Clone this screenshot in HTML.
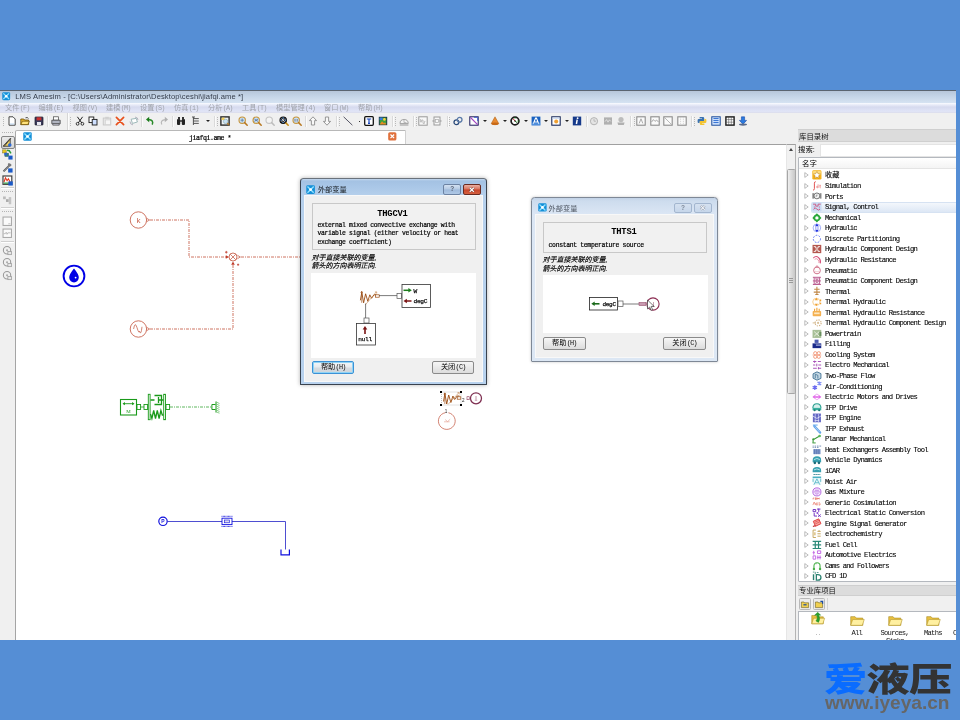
<!DOCTYPE html><html lang="zh"><head><meta charset="utf-8"><title>LMS Amesim</title><style>
*{margin:0;padding:0;box-sizing:border-box}
html,body{width:960px;height:720px;overflow:hidden;background:#558ed5}
body{position:relative;font-family:"Liberation Sans","Noto Sans CJK SC",sans-serif;color:#000}
.a{position:absolute}
.t{position:absolute;white-space:nowrap;line-height:1}
.mono{font-family:"Liberation Mono","Noto Sans CJK SC",monospace}
svg{position:absolute;overflow:visible}
#win{will-change:transform;left:0;top:90px;width:956px;height:550px;background:#f0f0f0;overflow:hidden}
#title{left:0;top:0;width:956px;height:13px;background:linear-gradient(#b7c6da 0%,#c3d3e6 40%,#d6e3f2 100%);border-top:1px solid #5a6470}
#menu{left:0;top:13px;width:956px;height:10px;background:linear-gradient(#fafcff 0,#eef1fb 12%,#d6daee 40%,#dfe3f6 78%,#e1e4f5 90%,#d9dae8 100%)}
#menu .t{font-size:7.2px;color:#a0a3ab;top:.8px}
#menu .t i{font-style:normal;font-size:6.8px;font-family:"Liberation Mono",monospace;letter-spacing:-.75px;position:relative;top:-.2px;margin-left:.3px}
#tbar{left:0;top:23px;width:956px;height:17px;background:#f0f0f0}
.sep{position:absolute;top:2.5px;width:2px;height:11px;border-left:1px solid #dadada;border-right:1px solid #fbfbfb}
.grip{position:absolute;top:3.5px;width:1px;height:10px;background:repeating-linear-gradient(#b9b9b9 0 1px,transparent 1px 2px)}
.dd{position:absolute;top:7.2px;width:0;height:0;border:2.4px solid transparent;border-top:2.8px solid #222;border-bottom:0;margin-left:-.4px}
#left{left:0;top:40px;width:15px;height:510px;background:#f0f0f0}
#tabrow{left:15px;top:40px;width:771px;height:14px;background:#f0f0f0}
#tab{left:0;top:-.2px;width:391px;height:14px;background:#fff;border-right:1px solid #d0d0d0;border-left:1px solid #a9a9a9;border-top:1px solid #b8b8b8;border-top-left-radius:2px}
#canvas{left:15px;top:53.6px;width:771px;height:497px;background:#fff;border-left:1px solid #a5a5a5;border-top:1px solid #a0a0a0}
#vsb{left:786px;top:53.6px;width:10.3px;height:497px;background:#f1f1f1;border-top:1px solid #a0a0a0;border-right:1px solid #b4b4b4;border-left:1px solid #e6e6e6}
#lib{left:797px;top:40px;width:159px;height:510px;background:#f0f0f0}
.hdr{position:absolute;left:1px;width:158px;height:11px;background:#dcdcdc;border-top:1px solid #cfcfcf;border-bottom:1px solid #cfcfcf}
.hdr .t{left:1px;top:1.2px;font-size:7.4px;color:#111}
#tree{left:1px;top:26.7px;width:160px;height:425.3px;background:#fff;border:1px solid #b4b8be;border-radius:1px}
.row{position:absolute;left:0;width:160px;height:10.55px}
.row .tx{position:absolute;left:26px;top:1.6px;font-size:7.2px;line-height:1;white-space:nowrap;color:#000;-webkit-text-stroke:.1px #000}
.row .ar{position:absolute;left:5px;top:1.3px}
.row svg.ic{left:12.6px;top:-.7px}
.lt{font-family:"Liberation Mono","Noto Sans CJK SC",monospace;letter-spacing:-.77px}
</style></head><body>
<div id="win" class="a">
<div id="title" class="a">
<svg style="left:1.9px;top:.9px" width="8.4" height="8.4" viewBox="0 0 10 10"><rect x=".3" y=".3" width="9.4" height="9.4" rx="1.6" fill="#1590d8"/><path d="M1.6 1.6 L8.4 8.4 M8.4 1.6 L1.6 8.4" stroke="#8fe0ff" stroke-width="1.5"/><circle cx="5" cy="5" r="1.5" fill="#fff"/></svg>
<div class="t" id="ttl" style="left:15.3px;top:2.2px;font-size:7.6px;color:#343c4a;letter-spacing:.1px">LMS Amesim - [C:\Users\Administrator\Desktop\ceshi\jiafqi.ame *]</div>
</div>
<div id="menu" class="a">
<div class="t" style="left:5px">文件<i>(F)</i></div>
<div class="t" style="left:38.5px">编辑<i>(E)</i></div>
<div class="t" style="left:72.5px">视图<i>(V)</i></div>
<div class="t" style="left:106px">建模<i>(M)</i></div>
<div class="t" style="left:140px">设置<i>(S)</i></div>
<div class="t" style="left:174px">仿真<i>(i)</i></div>
<div class="t" style="left:208px">分析<i>(A)</i></div>
<div class="t" style="left:242px">工具<i>(T)</i></div>
<div class="t" style="left:276px">模型管理<i>(4)</i></div>
<div class="t" style="left:324px">窗口<i>(W)</i></div>
<div class="t" style="left:358px">帮助<i>(H)</i></div>
</div>
<div id="tbar" class="a">
<div class="a" style="left:66.5px;top:0;width:2px;height:16.5px;border-left:1px solid #d6d6d6;border-right:1px solid #fcfcfc"></div>
<svg style="left:7px;top:2.9000000000000004px" width="10" height="10" viewBox="0 0 10 10"><path d="M2 .8h4l2.2 2.2v6.2H2z" fill="#fff" stroke="#333" stroke-width=".9"/><path d="M3 7.5h4.2v1H3z" fill="#b8d4f0"/></svg>
<svg style="left:20px;top:2.9000000000000004px" width="10" height="10" viewBox="0 0 10 10"><path d="M.8 3h3l.8 1h4v4.6H.8z" fill="#e8b830" stroke="#6a4a00" stroke-width=".8"/><path d="M.8 8.6l1.6-3.4h7l-1.6 3.4z" fill="#ffe27a" stroke="#6a4a00" stroke-width=".7"/><path d="M5.5 1.8q2-.9 3 .8" fill="none" stroke="#222" stroke-width=".8"/></svg>
<svg style="left:34px;top:2.9000000000000004px" width="10" height="10" viewBox="0 0 10 10"><rect x="1" y="1" width="8" height="8" rx=".6" fill="#3a3a5a" stroke="#1a1a2a" stroke-width=".7"/><rect x="2.6" y="1.3" width="4.8" height="3" fill="#c83030"/><rect x="3" y="6" width="4" height="3" fill="#e8e8f0"/></svg>
<svg style="left:51px;top:2.9000000000000004px" width="10" height="10" viewBox="0 0 10 10"><rect x="2.6" y=".8" width="4.8" height="3.4" fill="#fff" stroke="#444" stroke-width=".7"/><path d="M.8 4.2h8.4v3.6H.8z" fill="#b0b4c0" stroke="#333" stroke-width=".7"/><path d="M1.8 7.8h6.4v1.4H1.8z" fill="#dde" stroke="#333" stroke-width=".6"/></svg>
<svg style="left:75px;top:2.9000000000000004px" width="10" height="10" viewBox="0 0 10 10"><path d="M2.4 .8L6.8 7M7.6 .8L3.2 7" stroke="#222" stroke-width="1" fill="none"/><circle cx="2.6" cy="7.8" r="1.4" fill="none" stroke="#222" stroke-width=".9"/><circle cx="7.4" cy="7.8" r="1.4" fill="none" stroke="#222" stroke-width=".9"/></svg>
<svg style="left:88px;top:2.9000000000000004px" width="10" height="10" viewBox="0 0 10 10"><rect x="1" y="1" width="4.8" height="5.6" fill="#fff" stroke="#1a1a1a" stroke-width=".9"/><rect x="4.2" y="3.4" width="4.8" height="5.6" fill="#cfe0ff" stroke="#1a1a1a" stroke-width=".9"/></svg>
<svg style="left:102px;top:2.9000000000000004px" width="10" height="10" viewBox="0 0 10 10"><rect x="1.2" y="2" width="7.6" height="7" fill="#e4e4e4" stroke="#c4c4c4" stroke-width=".8"/><rect x="3.2" y=".8" width="3.6" height="2" fill="#d0d0d0"/><rect x="3.4" y="4" width="5" height="4.6" fill="#f6f6f6" stroke="#c8c8c8" stroke-width=".5"/></svg>
<svg style="left:115px;top:2.9000000000000004px" width="10" height="10" viewBox="0 0 10 10"><path d="M1.4 1.4L8.6 8.6M8.6 1.4L1.4 8.6" stroke="#e8501c" stroke-width="1.7" stroke-linecap="round"/></svg>
<svg style="left:129px;top:2.9000000000000004px" width="10" height="10" viewBox="0 0 10 10"><path d="M2.2 3.2l5-.8 1.2 3.6-5 1.4z" fill="#fff" stroke="#8aa" stroke-width=".8"/><path d="M1 5.5q0 3 3 3.4M9 4q0-2.6-3-3" stroke="#99a" stroke-width=".7" fill="none"/></svg>
<svg style="left:145px;top:2.9000000000000004px" width="10" height="10" viewBox="0 0 10 10"><path d="M7.2 8.6q2-4.6-3.8-5" fill="none" stroke="#2a8a2a" stroke-width="1.5"/><path d="M1 3.6l3.2-2.8v5.4z" fill="#1a7a1a"/></svg>
<svg style="left:159px;top:2.9000000000000004px" width="10" height="10" viewBox="0 0 10 10"><path d="M2.8 8.6q-2-4.6 3.8-5" fill="none" stroke="#b8b8b8" stroke-width="1.2"/><path d="M9 3.6L5.8.8v5.4z" fill="#b0b0b0"/></svg>
<svg style="left:176px;top:2.9000000000000004px" width="10" height="10" viewBox="0 0 10 10"><rect x="1" y="3" width="3.2" height="6" rx="1" fill="#222"/><rect x="5.8" y="3" width="3.2" height="6" rx="1" fill="#222"/><rect x="2" y="1" width="2" height="3" fill="#333"/><rect x="6" y="1" width="2" height="3" fill="#333"/><rect x="4" y="4" width="2" height="2" fill="#555"/></svg>
<svg style="left:191px;top:2.9000000000000004px" width="10" height="10" viewBox="0 0 10 10"><path d="M2.4 1v8M2.4 2.6h5.4M2.4 5h5.4M2.4 7.4h5.4" stroke="#444" stroke-width=".9" fill="none"/><path d="M1 1h3" stroke="#444" stroke-width=".9"/></svg>
<svg style="left:220px;top:2.9000000000000004px" width="10" height="10" viewBox="0 0 10 10"><rect x=".9" y=".9" width="8.2" height="8.2" fill="#eef2f6" stroke="#2a2a2a" stroke-width="1.4"/><rect x="1.6" y="1.6" width="3" height="2.4" fill="#f0d060"/><circle cx="5.6" cy="5.4" r="2.2" fill="#c6dff5" stroke="#8aa" stroke-width=".6"/><path d="M7.2 7.2L9.2 9.2" stroke="#b87820" stroke-width="1.2"/></svg>
<svg style="left:238px;top:2.9000000000000004px" width="10" height="10" viewBox="0 0 10 10"><circle cx="4.2" cy="4.2" r="3.2" fill="#c6dff5" stroke="#c8963c" stroke-width="1.1"/><path d="M6.6 6.6L9.2 9.2" stroke="#b87820" stroke-width="1.5" stroke-linecap="round"/><path d="M2.6 4.2h3.2M4.2 2.6v3.2" stroke="#5a7a9a" stroke-width=".8"/></svg>
<svg style="left:251.5px;top:2.9000000000000004px" width="10" height="10" viewBox="0 0 10 10"><circle cx="4.2" cy="4.2" r="3.2" fill="#c6dff5" stroke="#c8963c" stroke-width="1.1"/><path d="M6.6 6.6L9.2 9.2" stroke="#b87820" stroke-width="1.5" stroke-linecap="round"/><path d="M2.4 3l3.6 2.4M2.4 5.4l3.6-2.4" stroke="#4a6a9a" stroke-width=".8"/></svg>
<svg style="left:265px;top:2.9000000000000004px" width="10" height="10" viewBox="0 0 10 10"><circle cx="4.2" cy="4.2" r="3.2" fill="#f4f4f4" stroke="#c4c4c4" stroke-width="1.1"/><path d="M6.6 6.6L9.2 9.2" stroke="#bdbdbd" stroke-width="1.5" stroke-linecap="round"/></svg>
<svg style="left:278.5px;top:2.9000000000000004px" width="10" height="10" viewBox="0 0 10 10"><circle cx="4.2" cy="4.2" r="3.2" fill="#6aa0e0" stroke="#111" stroke-width="1.1"/><path d="M6.6 6.6L9.2 9.2" stroke="#c88a10" stroke-width="1.5" stroke-linecap="round"/><path d="M1.8 1.8l4.8 4.8M6.6 1.8L1.8 6.6" stroke="#111" stroke-width="1.7"/><path d="M2.6 2.6l3.2 3.2M5.8 2.6L2.6 5.8" stroke="#fff" stroke-width=".8"/></svg>
<svg style="left:292px;top:2.9000000000000004px" width="10" height="10" viewBox="0 0 10 10"><circle cx="4.2" cy="4.2" r="3.2" fill="#c6dff5" stroke="#c8963c" stroke-width="1.1"/><path d="M6.6 6.6L9.2 9.2" stroke="#b87820" stroke-width="1.5" stroke-linecap="round"/><path d="M3 3v2.6M5.2 3v2.6" stroke="#556" stroke-width=".7"/></svg>
<svg style="left:308px;top:2.9000000000000004px" width="10" height="10" viewBox="0 0 10 10"><path d="M5 .8L8.6 4.6H6.6V9H3.4V4.6H1.4z" fill="#f8f8f8" stroke="#8c8c8c" stroke-width=".9"/></svg>
<svg style="left:322px;top:2.9000000000000004px" width="10" height="10" viewBox="0 0 10 10"><path d="M5 9.2L8.6 5.4H6.6V1H3.4v4.4H1.4z" fill="#f8f8f8" stroke="#8c8c8c" stroke-width=".9"/></svg>
<svg style="left:343px;top:2.9000000000000004px" width="10" height="10" viewBox="0 0 10 10"><path d="M.6 .8L9.4 9.2" stroke="#445" stroke-width=".9"/></svg>
<svg style="left:364px;top:2.9000000000000004px" width="10" height="10" viewBox="0 0 10 10"><rect x=".7" y=".7" width="8.6" height="8.6" rx="1" fill="#fff" stroke="#111" stroke-width="1.3"/><path d="M2.8 3h4.4M5 3v4.4M4 7.4h2" stroke="#1a48c0" stroke-width="1.2"/></svg>
<svg style="left:378px;top:2.9000000000000004px" width="10" height="10" viewBox="0 0 10 10"><rect x=".8" y=".8" width="8.4" height="8.4" fill="#1a2a4a"/><rect x="1.6" y="1.6" width="6.8" height="6.8" fill="#3aa040"/><circle cx="6.4" cy="3.4" r="1.3" fill="#ffd040"/><path d="M1.6 8.4l2.4-3.2 2 2 1-1 1.4 2.2z" fill="#e88a20"/><path d="M1.6 1.6h3v2.4h-3z" fill="#3a7ae0"/></svg>
<svg style="left:399px;top:2.9000000000000004px" width="10" height="10" viewBox="0 0 10 10"><path d="M1 7.6a4.1 4.1 0 1 1 8.2 0z" fill="#f4f4f4" stroke="#a0a0a0" stroke-width="1"/><path d="M5 6.6V3.4M5 6.6h2.4" stroke="#aaa" stroke-width=".8"/><path d="M.8 9h8.6" stroke="#a8a8a8" stroke-width="1.2"/></svg>
<svg style="left:418px;top:2.9000000000000004px" width="10" height="10" viewBox="0 0 10 10"><rect x=".8" y=".8" width="8.4" height="8.4" fill="#f8f8f8" stroke="#9a9a9a" stroke-width="1"/><path d="M2.4 3v3h1.2v-2h1.4v3.4h1.4v-2h1" stroke="#aaa" stroke-width=".7" fill="none"/></svg>
<svg style="left:432px;top:2.9000000000000004px" width="10" height="10" viewBox="0 0 10 10"><rect x="2" y="1" width="6" height="8" fill="#f8f8f8" stroke="#9a9a9a" stroke-width="1"/><rect x="3.4" y="3.4" width="3.2" height="3.2" fill="none" stroke="#aaa" stroke-width=".7"/><path d="M.4 5h2M7.6 5h2" stroke="#999" stroke-width="1"/></svg>
<svg style="left:453px;top:2.9000000000000004px" width="10" height="10" viewBox="0 0 10 10"><circle cx="3.4" cy="6.2" r="2.4" fill="none" stroke="#2a4a7a" stroke-width="1.3"/><circle cx="6.6" cy="3.8" r="2.4" fill="none" stroke="#5a7aa8" stroke-width="1.3"/></svg>
<svg style="left:469px;top:2.9000000000000004px" width="10" height="10" viewBox="0 0 10 10"><rect x=".8" y=".8" width="8.4" height="8.4" fill="#fff" stroke="#1a1a5a" stroke-width="1"/><path d="M1.4 1.4L8.6 8.6" stroke="#a040c0" stroke-width="1.2"/><path d="M5 1.4h3.6V5" fill="none" stroke="#4060d0" stroke-width=".9"/></svg>
<svg style="left:490px;top:2.9000000000000004px" width="10" height="10" viewBox="0 0 10 10"><path d="M5 .8L8.8 7.6Q5 10 1.2 7.6z" fill="#e88a30" stroke="#a85a10" stroke-width=".5"/><ellipse cx="5" cy="7.8" rx="3.6" ry="1.3" fill="#c86a18"/></svg>
<svg style="left:510px;top:2.9000000000000004px" width="10" height="10" viewBox="0 0 10 10"><circle cx="5" cy="5" r="3.9" fill="#fff" stroke="#1a1a1a" stroke-width="1.7"/><path d="M5 1.2v1.4M8.8 5H7.4" stroke="#2a9a2a" stroke-width=".9"/><path d="M5 5L3.2 2.8" stroke="#d02020" stroke-width="1"/><path d="M5 5l2 1.6" stroke="#1a7a1a" stroke-width="1"/><circle cx="5" cy="5" r=".8" fill="#222"/></svg>
<svg style="left:531px;top:2.9000000000000004px" width="10" height="10" viewBox="0 0 10 10"><rect x=".6" y=".6" width="8.8" height="8.8" fill="#1a62c0"/><path d="M2.2 8L4.6 2h.8L7.8 8M3.2 6h3.6" stroke="#fff" stroke-width="1.1" fill="none"/><rect x=".6" y="6.6" width="8.8" height="2.8" fill="#7ab0f0" opacity=".55"/></svg>
<svg style="left:551px;top:2.9000000000000004px" width="10" height="10" viewBox="0 0 10 10"><rect x=".8" y=".8" width="8.4" height="8.4" fill="#fff" stroke="#1a2a5a" stroke-width="1.1"/><circle cx="5.2" cy="5.4" r="2" fill="#f0a030"/><path d="M1.4 1.4h7.2v1.4H1.4z" fill="#c8d8f0"/></svg>
<svg style="left:572px;top:2.9000000000000004px" width="10" height="10" viewBox="0 0 10 10"><rect x=".8" y=".6" width="8.4" height="8.8" fill="#163a8a"/><path d="M5.2 3.6L4.4 8" stroke="#fff" stroke-width="1.5"/><circle cx="5.6" cy="2.2" r=".9" fill="#fff"/></svg>
<svg style="left:589px;top:2.9000000000000004px" width="10" height="10" viewBox="0 0 10 10"><circle cx="5" cy="5.2" r="3.6" fill="#e4e4e4" stroke="#b4b4b4" stroke-width="1"/><path d="M5 5.2V3M5 5.2h2" stroke="#aaa" stroke-width=".7"/></svg>
<svg style="left:603px;top:2.9000000000000004px" width="10" height="10" viewBox="0 0 10 10"><rect x="1" y="1.4" width="8" height="7.2" fill="#b0b0b0"/><path d="M2 5.6l1.6-2 1.4 2.6 1.4-2.4 1.4 1.6" stroke="#eee" stroke-width=".7" fill="none"/></svg>
<svg style="left:616px;top:2.9000000000000004px" width="10" height="10" viewBox="0 0 10 10"><circle cx="5" cy="3.6" r="2.6" fill="#bcbcbc"/><path d="M1.4 6.6h7.2l-.8 2.4H2.2z" fill="#b0b0b0"/></svg>
<svg style="left:636px;top:2.9000000000000004px" width="10" height="10" viewBox="0 0 10 10"><rect x=".8" y=".8" width="8.4" height="8.4" fill="#fafafa" stroke="#8c8c8c" stroke-width="1.1"/><path d="M3.2 7.4L5 2.8l1.8 4.6" stroke="#888" stroke-width=".7" fill="none"/></svg>
<svg style="left:650px;top:2.9000000000000004px" width="10" height="10" viewBox="0 0 10 10"><rect x=".8" y=".8" width="8.4" height="8.4" fill="#fafafa" stroke="#8c8c8c" stroke-width="1.1"/><path d="M1.6 6l1.8-2.4 1.6 1.8 1.6-1.4 1.8 2" stroke="#888" stroke-width=".7" fill="none"/></svg>
<svg style="left:663px;top:2.9000000000000004px" width="10" height="10" viewBox="0 0 10 10"><rect x=".8" y=".8" width="8.4" height="8.4" fill="#fafafa" stroke="#8c8c8c" stroke-width="1.1"/><path d="M1.6 1.6L8.4 8.4" stroke="#999" stroke-width=".7"/></svg>
<svg style="left:677px;top:2.9000000000000004px" width="10" height="10" viewBox="0 0 10 10"><rect x=".8" y=".8" width="8.4" height="8.4" fill="#fafafa" stroke="#8c8c8c" stroke-width="1.1"/><path d="M3.6 1.4v7.2M6.4 1.4v7.2" stroke="#bbb" stroke-width=".6" stroke-dasharray="1 .8"/></svg>
<svg style="left:697px;top:2.9000000000000004px" width="10" height="10" viewBox="0 0 10 10"><path d="M2.6 1h3.4q1.2 0 1.2 1.2V5H3.6Q2.6 5 2.6 6V7H1.6Q.6 7 .6 5.8V4.2Q.6 3 1.8 3H5V2.4H2.6z" fill="#3a72b0"/><path d="M7.4 9H4q-1.2 0-1.2-1.2V5h3.6Q7.4 5 7.4 4V3h1q1 0 1 1.2v1.6Q9.4 7 8.2 7H5v.6h2.4z" fill="#f4c430"/></svg>
<svg style="left:711px;top:2.9000000000000004px" width="10" height="10" viewBox="0 0 10 10"><rect x=".8" y=".8" width="8.4" height="8.4" fill="#d8e8ff" stroke="#1a4a9a" stroke-width="1"/><path d="M2.4 2.6h5.2M2.4 4.6h5.2M2.4 6.6h5.2" stroke="#2a6ad0" stroke-width="1"/></svg>
<svg style="left:725px;top:2.9000000000000004px" width="10" height="10" viewBox="0 0 10 10"><rect x=".9" y=".9" width="8.2" height="8.2" fill="#fff" stroke="#1a1a1a" stroke-width="1.4"/><path d="M.9 3.6h8.2M.9 6.2h8.2M3.7 .9v8.2M6.3 .9v8.2" stroke="#444" stroke-width=".5"/></svg>
<svg style="left:738px;top:2.9000000000000004px" width="10" height="10" viewBox="0 0 10 10"><path d="M3.4 .8h3.2v3.6h2L5 8.2 1.4 4.4h2z" fill="#2a7ae0" stroke="#0a3a9a" stroke-width=".5"/><ellipse cx="5" cy="8.6" rx="4" ry="1.1" fill="#5a6a8a"/></svg>
<div class="sep" style="left:47px"></div>
<div class="sep" style="left:141px"></div>
<div class="sep" style="left:172px"></div>
<div class="sep" style="left:213.5px"></div>
<div class="sep" style="left:305px"></div>
<div class="sep" style="left:336px"></div>
<div class="sep" style="left:392px"></div>
<div class="sep" style="left:413px"></div>
<div class="sep" style="left:446.5px"></div>
<div class="sep" style="left:586px"></div>
<div class="sep" style="left:629.5px"></div>
<div class="sep" style="left:690.5px"></div>
<div class="grip" style="left:3px"></div>
<div class="grip" style="left:70px"></div>
<div class="grip" style="left:216.5px"></div>
<div class="grip" style="left:338.5px"></div>
<div class="grip" style="left:394.5px"></div>
<div class="grip" style="left:415.5px"></div>
<div class="grip" style="left:449px"></div>
<div class="grip" style="left:634px"></div>
<div class="grip" style="left:694px"></div>
<div class="dd" style="left:206px"></div>
<div class="dd" style="left:483px"></div>
<div class="dd" style="left:503px"></div>
<div class="dd" style="left:524px"></div>
<div class="dd" style="left:544px"></div>
<div class="dd" style="left:565px"></div>
<div class="a" style="left:358.5px;top:8px;width:1.4px;height:1.4px;background:#333"></div>
</div>
<div id="left" class="a">
<div class="a" style="left:2px;top:2.2px;width:11px;height:1px;background:repeating-linear-gradient(90deg,#b4b4b4 0 1px,transparent 1px 2px)"></div>
<div class="a" style="left:1px;top:6px;width:13.5px;height:12.5px;border:1px solid #858585;border-radius:2px;background:linear-gradient(#e9e9e9,#d6d6d6)"></div>
<svg style="left:2.25px;top:7.25px" width="10.5" height="10.5" viewBox="0 0 10 10"><path d="M1 8.8L7.8 1.4V8.8z" fill="#f0d060" stroke="#333" stroke-width=".8"/><path d="M2 9L8.6 1" stroke="#444" stroke-width=".9"/><circle cx="7.4" cy="7.6" r="1.7" fill="#2a6ad8"/></svg>
<svg style="left:2px;top:19px" width="11" height="11" viewBox="0 0 10 10"><rect x=".6" y=".8" width="3.2" height="2.8" fill="#e8c820" stroke="#7a6a10" stroke-width=".4"/><path d="M4.6 1.2l2 .4 1.6 2.4" stroke="#2a9a3a" stroke-width="1.3" fill="none"/><rect x="2.6" y="3.8" width="3.4" height="3" fill="#3a8a5a" stroke="#1a4a7a" stroke-width=".4"/><rect x="2.2" y="3.4" width="2.4" height="2.4" fill="#2a62d0"/><rect x="5.8" y="6" width="3.8" height="3.6" fill="#1a5ac8"/></svg>
<svg style="left:2px;top:32px" width="11" height="11" viewBox="0 0 10 10"><path d="M1.4 8.6L7 2.8" stroke="#555" stroke-width="1.7"/><path d="M1.4 8.6L7 2.8" stroke="#aaa" stroke-width=".6"/><path d="M6 .8q2 .2 2.8 2l-1.2 1.4-2.4-2z" fill="#777"/><rect x="5.6" y="5.8" width="4" height="3.8" fill="#1a5ac8"/></svg>
<svg style="left:2px;top:44.5px" width="11" height="11" viewBox="0 0 10 10"><rect x=".9" y=".9" width="8" height="7.6" fill="#fff" stroke="#444" stroke-width="1.1"/><path d="M1.8 6.4l1.4-3.8 1.4 2.6 1.2-1.8 1.6 3" stroke="#e03820" stroke-width="1" fill="none"/><path d="M1.5 6.8h5v1.2h-5z" fill="#3a9a4a"/><rect x="5.8" y="5.8" width="4" height="3.8" fill="#1a5ac8"/></svg>
<div class="a" style="left:1px;top:57px;width:13px;height:2px;border-top:1px solid #d0d0d0;border-bottom:1px solid #fff"></div>
<div class="a" style="left:2px;top:60.5px;width:11px;height:1px;background:repeating-linear-gradient(90deg,#b4b4b4 0 1px,transparent 1px 2px)"></div>
<svg style="left:2.25px;top:64.75px" width="10.5" height="10.5" viewBox="0 0 10 10"><rect x="1" y="1.4" width="2.6" height="2.6" fill="#bbb"/><rect x="3.8" y="4" width="2.6" height="2.6" fill="#aaa"/><rect x="6.4" y="2" width="2.4" height="6.8" fill="#c4c4c4"/></svg>
<div class="a" style="left:1px;top:77px;width:13px;height:2px;border-top:1px solid #d0d0d0;border-bottom:1px solid #fff"></div>
<div class="a" style="left:2px;top:80.5px;width:11px;height:1px;background:repeating-linear-gradient(90deg,#b4b4b4 0 1px,transparent 1px 2px)"></div>
<svg style="left:2.25px;top:85.75px" width="10.5" height="10.5" viewBox="0 0 10 10"><rect x="1" y="1" width="8" height="8" fill="#fafafa" stroke="#a8a8a8" stroke-width="1"/><path d="M6 7.4h2" stroke="#bbb" stroke-width=".8"/></svg>
<svg style="left:2.25px;top:97.75px" width="10.5" height="10.5" viewBox="0 0 10 10"><rect x="1" y="1" width="8" height="8" fill="#fafafa" stroke="#a8a8a8" stroke-width="1"/><path d="M1.6 5.4h1.6l.8-1.4.8 2 .8-1.4h2.6" stroke="#aaa" stroke-width=".7" fill="none"/></svg>
<div class="a" style="left:1px;top:111px;width:13px;height:2px;border-top:1px solid #d0d0d0;border-bottom:1px solid #fff"></div>
<svg style="left:2.25px;top:114.75px" width="10.5" height="10.5" viewBox="0 0 10 10"><circle cx="4.8" cy="5" r="3.5" fill="#f0f0f0" stroke="#999" stroke-width="1"/><circle cx="4.8" cy="5" r="1" fill="#aaa"/><rect x="5.6" y="6.2" width="3.4" height="3" fill="#e8e8e8" stroke="#999" stroke-width=".7"/></svg>
<svg style="left:2.25px;top:127.25px" width="10.5" height="10.5" viewBox="0 0 10 10"><circle cx="4.8" cy="5" r="3.5" fill="#f0f0f0" stroke="#999" stroke-width="1"/><circle cx="4.8" cy="5" r="1" fill="#aaa"/><rect x="5.6" y="6.2" width="3.4" height="3" fill="#e8e8e8" stroke="#999" stroke-width=".7"/></svg>
<svg style="left:2.25px;top:139.75px" width="10.5" height="10.5" viewBox="0 0 10 10"><circle cx="4.8" cy="5" r="3.5" fill="#f0f0f0" stroke="#999" stroke-width="1"/><circle cx="4.8" cy="5" r="1" fill="#aaa"/><rect x="5.6" y="6.2" width="3.4" height="3" fill="#e8e8e8" stroke="#999" stroke-width=".7"/></svg>
</div>
<div id="tabrow" class="a"><div id="tab" class="a">
<svg style="left:6.5px;top:.8px" width="9" height="9" viewBox="0 0 10 10"><rect x=".3" y=".3" width="9.4" height="9.4" rx="1.4" fill="#1590d8"/><path d="M1.6 1.6L8.4 8.4M8.4 1.6L1.6 8.4" stroke="#8fe0ff" stroke-width="1.5"/><circle cx="5" cy="5" r="1.5" fill="#fff"/></svg>
<div class="t mono" style="left:173px;top:4.7px;font-size:6.6px;letter-spacing:-.45px;color:#000;-webkit-text-stroke:.2px #000">jiafqi.ame *</div>
<svg style="left:372.4px;top:1.6px" width="8.6" height="8.6" viewBox="0 0 9 9"><rect x=".2" y=".2" width="8.6" height="8.6" rx="1.6" fill="#e0713c"/><path d="M2.6 2.6l3.8 3.8M6.4 2.6L2.6 6.4" stroke="#fff" stroke-width="1.3"/></svg>
</div></div>
<div id="canvas" class="a"><svg style="left:-16px;top:-144.6px" width="960" height="720" viewBox="0 0 960 720" fill="none">
<circle cx="138.4" cy="220" r="8.2" stroke="#c86450" stroke-width=".9" fill="#fff"/>
<text x="138.5" y="222.8" font-family="Liberation Sans,sans-serif" font-size="8" fill="#c86450" text-anchor="middle">k</text>
<path d="M146.6 218.3l3 1.7-3 1.7" stroke="#c86450" stroke-width=".8"/>
<path d="M150 220H189V257H226" stroke="#c86450" stroke-width=".9" stroke-dasharray="3 1 1 1"/>
<circle cx="233" cy="257" r="4" stroke="#c86450" stroke-width=".9" fill="#fff"/><path d="M230.2 254.2l5.6 5.6M235.8 254.2l-5.6 5.6" stroke="#c86450" stroke-width=".8"/>
<path d="M225.8 255.2l3.2 1.8-3.2 1.8zM231.2 264.8l1.8-3.4 1.8 3.4z" fill="#c03a28"/><path d="M237.4 255.3l3 1.7-3 1.7" stroke="#c86450" stroke-width=".8"/>
<path d="M225 252.2h2.6M226.3 250.9v2.6M237 264.7h2.2M238.1 263.6v2.2" stroke="#c03a28" stroke-width=".8"/>
<path d="M241 257H301" stroke="#c86450" stroke-width=".9" stroke-dasharray="3 1 1 1"/>
<circle cx="138.4" cy="329" r="8.2" stroke="#c86450" stroke-width=".9" fill="#fff"/>
<path d="M133.6 329q1.4-8 3.4-1.4t2.4 3.6q1.6 5 2.6-4.4" stroke="#c86450" stroke-width=".8"/>
<path d="M146.6 327.3l3 1.7-3 1.7" stroke="#c86450" stroke-width=".8"/>
<path d="M150 329H233V265" stroke="#c86450" stroke-width=".9" stroke-dasharray="3 1 1 1"/>
<circle cx="74" cy="276" r="10.4" stroke="#0000e6" stroke-width="1.9" fill="#fff"/>
<path d="M74 268.6q4.8 5.8 4.8 9a4.8 4.8 0 0 1-9.6 0q0-3.2 4.8-9z" fill="#0000e6"/><circle cx="75.6" cy="277.6" r=".9" fill="#fff"/>
<rect x="120.5" y="399.5" width="16" height="15.5" stroke="#1a9a1a" stroke-width="1.1" fill="#fff"/>
<path d="M123.5 403.7h10" stroke="#1a9a1a" stroke-width=".9"/><path d="M122.5 403.7l2.4-1.6v3.2zM134.5 403.7l-2.4-1.6v3.2z" fill="#1a9a1a"/>
<text x="128.5" y="412.5" font-family="Liberation Serif,serif" font-size="5" fill="#1a9a1a" text-anchor="middle">M</text>
<rect x="137" y="404.5" width="3.6" height="5" stroke="#1a9a1a" stroke-width=".9" fill="#fff"/><path d="M140.6 407h3.4" stroke="#1a9a1a" stroke-width=".8"/>
<rect x="144" y="404.5" width="3.6" height="5" stroke="#1a9a1a" stroke-width=".9" fill="#fff"/>
<rect x="148.3" y="394.3" width="1.8" height="25.4" stroke="#1a9a1a" stroke-width=".9" fill="#fff"/><rect x="163.7" y="394.3" width="1.8" height="25.4" stroke="#1a9a1a" stroke-width=".9" fill="#fff"/>
<path d="M150.5 400h4M154.5 395.5h7v9h-7M158.5 397v6M158.5 400h5" stroke="#1a9a1a" stroke-width="1.3"/>
<path d="M150.5 414l1.4 4.5 1.8-8 1.8 8 1.8-8 1.8 8 1.8-8 1.4 4.5h1" stroke="#1a9a1a" stroke-width="1.3"/>
<rect x="166" y="404.5" width="3.6" height="5" stroke="#1a9a1a" stroke-width=".9" fill="#fff"/>
<path d="M170 407H211" stroke="#1a9a1a" stroke-width=".7" stroke-dasharray="3 1 1 1"/>
<path d="M215.5 404.5h-3.6v5h3.6M216 401.5v11" stroke="#1a9a1a" stroke-width="1"/><path d="M216.5 402l3 1.6M216.5 404l3 1.6M216.5 406l3 1.6M216.5 408l3 1.6M216.5 410l3 1.6M216.5 412l3 1.2" stroke="#1a9a1a" stroke-width=".5"/>
<circle cx="163" cy="521.3" r="4.2" stroke="#1010dd" stroke-width="1.2" fill="#fff"/><text x="163" y="523.3" font-family="Liberation Sans,sans-serif" font-size="5" font-weight="bold" fill="#1010dd" text-anchor="middle">P</text>
<path d="M167 521.5H285.5V549.5" stroke="#3a3acc" stroke-width=".9"/>
<rect x="222" y="518.2" width="10" height="6.4" stroke="#1010dd" stroke-width=".9" fill="#fff"/><rect x="224.5" y="520" width="5" height="2.8" stroke="#1010dd" stroke-width=".6" fill="#dde"/><path d="M221.6 516.3h10.8M221.6 526.4h10.8" stroke="#1010dd" stroke-width="1" stroke-dasharray=".8 .5"/>
<path d="M281 549.5v5.3h8.4v-5.3" stroke="#1010dd" stroke-width="1.2"/>
<rect x="441.5" y="392" width="19.5" height="13" stroke="#888" stroke-width=".5" stroke-dasharray="1 1" fill="#fff"/>
<path d="M443.5 401.5l1.4-8 1.8 10.5 2-9 2.2 7.5 2-6.5 1.8 3.5 2.4-3.5h2.4" stroke="#9a4a10" stroke-width=".9"/><path d="M444.8 393v11M443.8 394.4l1-1.6 1 1.6" stroke="#9a4a10" stroke-width=".6"/><path d="M448 404.5l11-12M457.4 392.6h1.8v1.8" stroke="#b87030" stroke-width=".5"/><rect x="457.2" y="396.8" width="3.6" height="2.4" stroke="#9a4a10" stroke-width=".7" fill="#fff"/>
<rect x="440" y="391" width="2" height="2" fill="#000"/>
<rect x="460" y="391" width="2" height="2" fill="#000"/>
<rect x="440" y="404" width="2" height="2" fill="#000"/>
<rect x="460" y="404" width="2" height="2" fill="#000"/>
<text x="462" y="402" font-family="Liberation Sans,sans-serif" font-size="4.6" fill="#222">2</text><text x="444.8" y="413" font-family="Liberation Sans,sans-serif" font-size="4.6" fill="#222">1</text>
<rect x="467" y="396.7" width="2.2" height="3" stroke="#8a3a5a" stroke-width=".6" fill="#fff"/>
<circle cx="476" cy="398.3" r="5.5" stroke="#7e2e50" stroke-width="1.25" fill="#fff"/><path d="M476 396v3.6M474.8 400.2h2.4" stroke="#b07a90" stroke-width=".8"/>
<path d="M448.4 412.75A8.4 8.4 0 1 1 445.2 412.75" stroke="#c86450" stroke-width=".8"/>
<path d="M444 421.8h5.6M445.2 419.6l2.4 2 2.6-2.4" stroke="#e09888" stroke-width=".6"/>
</svg></div>
<div id="vsb" class="a">
<div class="a" style="left:2px;top:3.5px;width:0;height:0;border:2.5px solid transparent;border-bottom:3px solid #444;border-top:0"></div>
<div class="a" style="left:-.3px;top:24.5px;width:9px;height:225px;border:1px solid #a6a6a6;border-radius:1.5px;background:linear-gradient(90deg,#efefef,#dedede 40%,#c8c8c8)"></div>
<div class="a" style="left:2px;top:133px;width:4px;height:5px;background:repeating-linear-gradient(#999 0 1px,transparent 1px 2px)"></div>
</div>
<div id="lib" class="a">
<div class="hdr" style="top:-.8px;height:12.5px"><div class="t" style="top:2.7px">库目录树</div></div>
<div class="t" style="left:1px;top:16.2px;font-size:7.4px">搜索:</div>
<div class="a" style="left:22.5px;top:14px;width:140px;height:12.5px;background:#fff;border:1px solid #e4e4e4"></div>
<div id="tree" class="a">
<div class="a" style="left:0;top:0;width:160px;height:11.8px;background:linear-gradient(#fff,#f4f4f4);border-bottom:1px solid #e4e4e4"><div class="t" style="left:3px;top:1.9px;font-size:7.4px">名字</div></div>
<div class="row" style="top:13.3px"><svg class="ar" width="5" height="6" viewBox="0 0 5 6"><path d="M.8 .6L4.2 3 .8 5.4z" fill="#fff" stroke="#a0a0a0" stroke-width=".7"/></svg><svg class="ic" width="9.8" height="9.8" viewBox="0 0 9 9"><rect x=".3" y=".3" width="8.4" height="8.4" rx="1.2" fill="#f5b21a"/><rect x=".9" y=".9" width="7.2" height="3.4" rx=".6" fill="#ffeaa0" opacity=".75"/><path d="M4.5 1.3l1 2.1 2.3.3-1.7 1.6.4 2.3-2-1.1-2 1.1.4-2.3L1.2 3.7l2.3-.3z" fill="#fff" stroke="#b57a10" stroke-width=".45"/></svg><div class="tx" style="top:.2px">收藏</div></div>
<div class="row" style="top:23.85px"><svg class="ar" width="5" height="6" viewBox="0 0 5 6"><path d="M.8 .6L4.2 3 .8 5.4z" fill="#fff" stroke="#a0a0a0" stroke-width=".7"/></svg><svg class="ic" width="9.8" height="9.8" viewBox="0 0 9 9"><path d="M3.4 .6q-1.2 0-1.2 1.4v5q0 1.4-1.2 1.4" stroke="#e05050" stroke-width=".9" fill="none"/><path d="M5.6 3v3.4M5.6 5q-1.6-.8-1.4.6t1.4.4M7.4 3.4v2.6q.2.6.8.2M6.8 4.4h1.4" stroke="#e87878" stroke-width=".6" fill="none"/></svg><div class="tx lt">Simulation</div></div>
<div class="row" style="top:34.4px"><svg class="ar" width="5" height="6" viewBox="0 0 5 6"><path d="M.8 .6L4.2 3 .8 5.4z" fill="#fff" stroke="#a0a0a0" stroke-width=".7"/></svg><svg class="ic" width="9.8" height="9.8" viewBox="0 0 9 9"><rect x=".3" y="2" width="1.7" height="5" fill="#8a8a8a"/><rect x="7" y="2" width="1.7" height="5" fill="#8a8a8a"/><circle cx="4.5" cy="4.5" r="2.7" fill="#f4f4f4" stroke="#666" stroke-width=".8"/><path d="M4.5 4.7V3.2M4.5 4.7h-1.2" stroke="#666" stroke-width=".6"/></svg><div class="tx lt">Ports</div></div>
<div class="row" style="top:44.95px"><div class="a" style="left:12px;top:-.3px;width:150px;height:10.6px;border:1px solid #d6e2f2;border-radius:1.5px;background:linear-gradient(#f3f7fc,#dde7f5)"></div><svg class="ar" width="5" height="6" viewBox="0 0 5 6"><path d="M.8 .6L4.2 3 .8 5.4z" fill="#fff" stroke="#a0a0a0" stroke-width=".7"/></svg><svg class="ic" width="9.8" height="9.8" viewBox="0 0 9 9"><rect x=".2" y=".2" width="8.6" height="8.6" rx="1" fill="#c9dbf3"/><path d="M1 2h2.4v1.8h2.2V2H8M1.4 6.8q1.5-2.4 3-.4t3 .2" stroke="#d05078" stroke-width=".8" fill="none"/><path d="M2.2 3.8v2M6.8 3.8v2" stroke="#c878a8" stroke-width=".6"/></svg><div class="tx lt">Signal, Control</div></div>
<div class="row" style="top:55.5px"><svg class="ar" width="5" height="6" viewBox="0 0 5 6"><path d="M.8 .6L4.2 3 .8 5.4z" fill="#fff" stroke="#a0a0a0" stroke-width=".7"/></svg><svg class="ic" width="9.8" height="9.8" viewBox="0 0 9 9"><path d="M4.5 .3L6.2 2H2.8zM4.5 8.7L6.2 7H2.8zM.3 4.5L2 2.8v3.4zM8.7 4.5L7 2.8v3.4z" fill="#2aa83a"/><circle cx="4.5" cy="4.5" r="2.3" fill="#fff" stroke="#2aa83a" stroke-width="1.5"/></svg><div class="tx lt">Mechanical</div></div>
<div class="row" style="top:66.05px"><svg class="ar" width="5" height="6" viewBox="0 0 5 6"><path d="M.8 .6L4.2 3 .8 5.4z" fill="#fff" stroke="#a0a0a0" stroke-width=".7"/></svg><svg class="ic" width="9.8" height="9.8" viewBox="0 0 9 9"><circle cx="4.5" cy="4.5" r="3.5" fill="#fff" stroke="#8a9af4" stroke-width=".7"/><path d="M4.5 .5l1.7 2.4H2.8zM4.5 8.5l1.7-2.4H2.8z" fill="#2434e0"/><path d="M3.5 3.2v2.6M5.5 3.2v2.6" stroke="#5a6af0" stroke-width=".6"/></svg><div class="tx lt">Hydraulic</div></div>
<div class="row" style="top:76.6px"><svg class="ar" width="5" height="6" viewBox="0 0 5 6"><path d="M.8 .6L4.2 3 .8 5.4z" fill="#fff" stroke="#a0a0a0" stroke-width=".7"/></svg><svg class="ic" width="9.8" height="9.8" viewBox="0 0 9 9"><circle cx="4.5" cy="4.5" r="3.3" fill="none" stroke="#5a72f0" stroke-width=".9" stroke-dasharray="1.5 1.3"/></svg><div class="tx lt">Discrete Partitioning</div></div>
<div class="row" style="top:87.15px"><svg class="ar" width="5" height="6" viewBox="0 0 5 6"><path d="M.8 .6L4.2 3 .8 5.4z" fill="#fff" stroke="#a0a0a0" stroke-width=".7"/></svg><svg class="ic" width="9.8" height="9.8" viewBox="0 0 9 9"><rect x=".5" y=".8" width="8" height="7.6" fill="#b4564e"/><path d="M1.6 2.4h1.8v1.4h2.2V2.4h1.8M1.6 6.8h1.8V5.4h2.2v1.4h1.8" stroke="#fff" stroke-width=".8" fill="none"/></svg><div class="tx lt">Hydraulic Component Design</div></div>
<div class="row" style="top:97.7px"><svg class="ar" width="5" height="6" viewBox="0 0 5 6"><path d="M.8 .6L4.2 3 .8 5.4z" fill="#fff" stroke="#a0a0a0" stroke-width=".7"/></svg><svg class="ic" width="9.8" height="9.8" viewBox="0 0 9 9"><path d="M1.2 2.8Q3.6 .2 6 2.4T7.6 7.6" stroke="#d8507a" stroke-width="1" fill="none"/><path d="M2.4 4Q4 2.6 5.4 4.2T6.4 7.4" stroke="#e88aa4" stroke-width=".8" fill="none"/></svg><div class="tx lt">Hydraulic Resistance</div></div>
<div class="row" style="top:108.25px"><svg class="ar" width="5" height="6" viewBox="0 0 5 6"><path d="M.8 .6L4.2 3 .8 5.4z" fill="#fff" stroke="#a0a0a0" stroke-width=".7"/></svg><svg class="ic" width="9.8" height="9.8" viewBox="0 0 9 9"><circle cx="4.6" cy="5" r="3.1" fill="#fff" stroke="#d07088" stroke-width=".9"/><path d="M3.7 2.2V1h1.8v1.2" stroke="#d07088" stroke-width=".7" fill="none"/><path d="M2.6 5.6q2 1.4 4 0" stroke="#e8b0bc" stroke-width=".6" fill="none"/></svg><div class="tx lt">Pneumatic</div></div>
<div class="row" style="top:118.8px"><svg class="ar" width="5" height="6" viewBox="0 0 5 6"><path d="M.8 .6L4.2 3 .8 5.4z" fill="#fff" stroke="#a0a0a0" stroke-width=".7"/></svg><svg class="ic" width="9.8" height="9.8" viewBox="0 0 9 9"><path d="M.8 1.2h7.4M.8 7.8h7.4M2 1.2v6.6M7 1.2v6.6M.8 4.5h7.4M4.5 2.4v4.2" stroke="#b8588c" stroke-width=".9" fill="none"/><path d="M2.4 1.6l4.2 2.6M6.6 1.6L2.4 4.2M2.4 4.8l4.2 2.6M6.6 4.8L2.4 7.4" stroke="#c87aa4" stroke-width=".7"/></svg><div class="tx lt">Pneumatic Component Design</div></div>
<div class="row" style="top:129.35px"><svg class="ar" width="5" height="6" viewBox="0 0 5 6"><path d="M.8 .6L4.2 3 .8 5.4z" fill="#fff" stroke="#a0a0a0" stroke-width=".7"/></svg><svg class="ic" width="9.8" height="9.8" viewBox="0 0 9 9"><path d="M4.5 .8v7.4M2 3h5M1.6 5.6h5.8M3 7.8h3" stroke="#c08848" stroke-width="1" fill="none"/></svg><div class="tx lt">Thermal</div></div>
<div class="row" style="top:139.9px"><svg class="ar" width="5" height="6" viewBox="0 0 5 6"><path d="M.8 .6L4.2 3 .8 5.4z" fill="#fff" stroke="#a0a0a0" stroke-width=".7"/></svg><svg class="ic" width="9.8" height="9.8" viewBox="0 0 9 9"><circle cx="4" cy="4.5" r="3.3" fill="#fff" stroke="#f6c070" stroke-width=".7"/><path d="M4 .7l1.5 2.2h-3zM4 8.3l1.5-2.2h-3z" fill="#f0a030"/><path d="M7.9 2.4v1.4M7.9 5.2v1.4" stroke="#f0a030" stroke-width="1.1"/></svg><div class="tx lt">Thermal Hydraulic</div></div>
<div class="row" style="top:150.45px"><svg class="ar" width="5" height="6" viewBox="0 0 5 6"><path d="M.8 .6L4.2 3 .8 5.4z" fill="#fff" stroke="#a0a0a0" stroke-width=".7"/></svg><svg class="ic" width="9.8" height="9.8" viewBox="0 0 9 9"><rect x=".6" y="3.6" width="7.8" height="4.8" rx=".8" fill="#f4b050"/><path d="M2.4 3.6V1.6M4.5 3.6V.8M6.6 3.6V1.6" stroke="#f0a030" stroke-width="1"/><rect x="2" y="5" width="5" height="1.6" fill="#fde8c0"/></svg><div class="tx lt">Thermal Hydraulic Resistance</div></div>
<div class="row" style="top:161px"><svg class="ar" width="5" height="6" viewBox="0 0 5 6"><path d="M.8 .6L4.2 3 .8 5.4z" fill="#fff" stroke="#a0a0a0" stroke-width=".7"/></svg><svg class="ic" width="9.8" height="9.8" viewBox="0 0 9 9"><path d="M.6 4.5h3" stroke="#d8c098" stroke-width="1"/><circle cx="5.6" cy="4.5" r="2.8" fill="none" stroke="#d0b080" stroke-width="1" stroke-dasharray="1.2 1"/><circle cx="5.6" cy="4.5" r="1" fill="#d8c098"/></svg><div class="tx lt">Thermal Hydraulic Component Design</div></div>
<div class="row" style="top:171.55px"><svg class="ar" width="5" height="6" viewBox="0 0 5 6"><path d="M.8 .6L4.2 3 .8 5.4z" fill="#fff" stroke="#a0a0a0" stroke-width=".7"/></svg><svg class="ic" width="9.8" height="9.8" viewBox="0 0 9 9"><rect x=".5" y=".8" width="8" height="7.4" fill="#a8c098"/><path d="M2 2.4l4.6 4.2M6.6 2.4L2 6.6" stroke="#e8f0e0" stroke-width=".9"/><rect x="6.8" y="2.6" width="1.8" height="3.8" fill="#6a9060"/></svg><div class="tx lt">Powertrain</div></div>
<div class="row" style="top:182.1px"><svg class="ar" width="5" height="6" viewBox="0 0 5 6"><path d="M.8 .6L4.2 3 .8 5.4z" fill="#fff" stroke="#a0a0a0" stroke-width=".7"/></svg><svg class="ic" width="9.8" height="9.8" viewBox="0 0 9 9"><rect x=".5" y="4" width="8" height="4.4" fill="#1a2a8a"/><rect x="2.4" y=".6" width="3.6" height="3" fill="#4a5ab0"/><path d="M3.6 5.6h4.6" stroke="#c8d0f0" stroke-width=".9"/></svg><div class="tx lt">Filling</div></div>
<div class="row" style="top:192.65px"><svg class="ar" width="5" height="6" viewBox="0 0 5 6"><path d="M.8 .6L4.2 3 .8 5.4z" fill="#fff" stroke="#a0a0a0" stroke-width=".7"/></svg><svg class="ic" width="9.8" height="9.8" viewBox="0 0 9 9"><circle cx="3" cy="3" r="1.5" fill="none" stroke="#f09070" stroke-width=".8"/><circle cx="6.2" cy="3" r="1.5" fill="none" stroke="#f09070" stroke-width=".8"/><circle cx="3" cy="6.2" r="1.5" fill="none" stroke="#f09070" stroke-width=".8"/><circle cx="6.2" cy="6.2" r="1.5" fill="none" stroke="#f09070" stroke-width=".8"/><path d="M.4 4.6h8.2" stroke="#f4a890" stroke-width=".7"/></svg><div class="tx lt">Cooling System</div></div>
<div class="row" style="top:203.2px"><svg class="ar" width="5" height="6" viewBox="0 0 5 6"><path d="M.8 .6L4.2 3 .8 5.4z" fill="#fff" stroke="#a0a0a0" stroke-width=".7"/></svg><svg class="ic" width="9.8" height="9.8" viewBox="0 0 9 9"><path d="M1 1.4h3M5.4 1.4h2.8M2.4 .6v2M1 4.6h2M4.4 3.4v2.4M5.8 4.6h2.6M1 7.6h3.4M6 6.6v2M5.4 7.6h3" stroke="#a850b8" stroke-width=".9" fill="none"/></svg><div class="tx lt">Electro Mechanical</div></div>
<div class="row" style="top:213.75px"><svg class="ar" width="5" height="6" viewBox="0 0 5 6"><path d="M.8 .6L4.2 3 .8 5.4z" fill="#fff" stroke="#a0a0a0" stroke-width=".7"/></svg><svg class="ic" width="9.8" height="9.8" viewBox="0 0 9 9"><path d="M1 2.6L4.6 .8l3.6 1.6v4.4L4.6 8.4 1 6.6z" fill="#c4d8e4" stroke="#4a7898" stroke-width=".9"/><path d="M3 3v3.6M3 3l2.4 1v3" stroke="#4a7898" stroke-width=".8" fill="none"/></svg><div class="tx lt">Two-Phase Flow</div></div>
<div class="row" style="top:224.3px"><svg class="ar" width="5" height="6" viewBox="0 0 5 6"><path d="M.8 .6L4.2 3 .8 5.4z" fill="#fff" stroke="#a0a0a0" stroke-width=".7"/></svg><svg class="ic" width="9.8" height="9.8" viewBox="0 0 9 9"><path d="M2.6 3.8v4.4M.6 4.9l4 2.2M.6 7.1l4-2.2" stroke="#6a6af0" stroke-width="1.2"/><path d="M5 .8l3.4 3M6.6 .4v3.4M8.6 1.2L5 3.2" stroke="#7a8af4" stroke-width="1.1"/></svg><div class="tx lt">Air-Conditioning</div></div>
<div class="row" style="top:234.85px"><svg class="ar" width="5" height="6" viewBox="0 0 5 6"><path d="M.8 .6L4.2 3 .8 5.4z" fill="#fff" stroke="#a0a0a0" stroke-width=".7"/></svg><svg class="ic" width="9.8" height="9.8" viewBox="0 0 9 9"><path d="M.4 4.5L2.6 2.8v1h3.8v-1L8.6 4.5 6.4 6.2v-1H2.6v1z" fill="#e060e8"/><ellipse cx="4.5" cy="4.5" rx="1.8" ry="2.6" fill="none" stroke="#e890f0" stroke-width=".7"/></svg><div class="tx lt">Electric Motors and Drives</div></div>
<div class="row" style="top:245.4px"><svg class="ar" width="5" height="6" viewBox="0 0 5 6"><path d="M.8 .6L4.2 3 .8 5.4z" fill="#fff" stroke="#a0a0a0" stroke-width=".7"/></svg><svg class="ic" width="9.8" height="9.8" viewBox="0 0 9 9"><path d="M.8 5.6q0-4 3.7-4t3.7 4" fill="#d8f0ec" stroke="#2aa090" stroke-width="1"/><rect x=".5" y="5.4" width="8" height="2.2" fill="#3ab0a0"/><circle cx="2.4" cy="7.6" r="1" fill="#1a7a70"/><circle cx="6.6" cy="7.6" r="1" fill="#1a7a70"/></svg><div class="tx lt">IFP Drive</div></div>
<div class="row" style="top:255.95px"><svg class="ar" width="5" height="6" viewBox="0 0 5 6"><path d="M.8 .6L4.2 3 .8 5.4z" fill="#fff" stroke="#a0a0a0" stroke-width=".7"/></svg><svg class="ic" width="9.8" height="9.8" viewBox="0 0 9 9"><rect x=".8" y=".5" width="7.4" height="8" fill="#6468c4"/><path d="M3 .5v8M6 .5v8" stroke="#b8bcec" stroke-width=".8"/><path d="M.8 2.8l3.7 2.2 3.7-2.2M2.4 7h4.2" stroke="#e8eafc" stroke-width=".7" fill="none"/></svg><div class="tx lt">IFP Engine</div></div>
<div class="row" style="top:266.5px"><svg class="ar" width="5" height="6" viewBox="0 0 5 6"><path d="M.8 .6L4.2 3 .8 5.4z" fill="#fff" stroke="#a0a0a0" stroke-width=".7"/></svg><svg class="ic" width="9.8" height="9.8" viewBox="0 0 9 9"><path d="M.8 1h4.4" stroke="#8cc0f2" stroke-width="1.3"/><path d="M2.2 2l5.2 5.8" stroke="#62a4ea" stroke-width="2.2" stroke-linecap="round"/><path d="M2.6 2.4l4.4 5" stroke="#c4e0fa" stroke-width=".6"/></svg><div class="tx lt">IFP Exhaust</div></div>
<div class="row" style="top:277.05px"><svg class="ar" width="5" height="6" viewBox="0 0 5 6"><path d="M.8 .6L4.2 3 .8 5.4z" fill="#fff" stroke="#a0a0a0" stroke-width=".7"/></svg><svg class="ic" width="9.8" height="9.8" viewBox="0 0 9 9"><path d="M1 8V5.4L6.6 2" stroke="#3a9a3a" stroke-width="1" fill="none"/><circle cx="1.2" cy="4.8" r="1" fill="#3a9a3a"/><circle cx="7" cy="1.8" r="1.2" fill="#58b858"/><path d="M.4 8.2h3" stroke="#3a9a3a" stroke-width=".9"/></svg><div class="tx lt">Planar Mechanical</div></div>
<div class="row" style="top:287.6px"><svg class="ar" width="5" height="6" viewBox="0 0 5 6"><path d="M.8 .6L4.2 3 .8 5.4z" fill="#fff" stroke="#a0a0a0" stroke-width=".7"/></svg><svg class="ic" width="9.8" height="9.8" viewBox="0 0 9 9"><path d="M.6 1h1M.6 2.2h1M2.4 1h1.4M2.4 2.2h1.4M4.6 1h1.4M4.6 2.2h1.4M6.8 1h1.6" stroke="#5070a0" stroke-width=".7"/><rect x="1" y="3.8" width="7" height="4.6" fill="#9ab0d8"/><path d="M2.6 3.8v4.6M4.5 3.8v4.6M6.4 3.8v4.6" stroke="#3a58a0" stroke-width=".8"/></svg><div class="tx lt">Heat Exchangers Assembly Tool</div></div>
<div class="row" style="top:298.15px"><svg class="ar" width="5" height="6" viewBox="0 0 5 6"><path d="M.8 .6L4.2 3 .8 5.4z" fill="#fff" stroke="#a0a0a0" stroke-width=".7"/></svg><svg class="ic" width="9.8" height="9.8" viewBox="0 0 9 9"><path d="M.6 5q0-3.8 4-3.8T8.4 5v1.6H.6z" fill="#38a0b0"/><path d="M1.8 4.2q2.7-2 5.4 0" stroke="#c8ecf0" stroke-width=".8" fill="none"/><circle cx="2.6" cy="7.2" r="1.2" fill="#1a6a78"/><circle cx="6.4" cy="7.2" r="1.2" fill="#1a6a78"/></svg><div class="tx lt">Vehicle Dynamics</div></div>
<div class="row" style="top:308.7px"><svg class="ar" width="5" height="6" viewBox="0 0 5 6"><path d="M.8 .6L4.2 3 .8 5.4z" fill="#fff" stroke="#a0a0a0" stroke-width=".7"/></svg><svg class="ic" width="9.8" height="9.8" viewBox="0 0 9 9"><path d="M.6 4.4q0-3.4 4-3.4T8.4 4.4v1.4H.6z" fill="#38a0b0"/><path d="M1.8 3.6q2.7-1.8 5.4 0" stroke="#c8ecf0" stroke-width=".8" fill="none"/><path d="M1.4 7.8h6.2" stroke="#2a8090" stroke-width="1.1" stroke-dasharray="1.2 .6"/></svg><div class="tx lt">iCAR</div></div>
<div class="row" style="top:319.25px"><svg class="ar" width="5" height="6" viewBox="0 0 5 6"><path d="M.8 .6L4.2 3 .8 5.4z" fill="#fff" stroke="#a0a0a0" stroke-width=".7"/></svg><svg class="ic" width="9.8" height="9.8" viewBox="0 0 9 9"><rect x=".6" y=".6" width="7.8" height="7.8" fill="#eaf8fa"/><path d="M.6 1.2h7.8" stroke="#4ab0c2" stroke-width="1.4"/><path d="M1.8 8L4.5 2.6 7.2 8M2.8 6.2h3.4M1 2.4v3M8 2.4v3" stroke="#58b8c8" stroke-width=".8" fill="none"/></svg><div class="tx lt">Moist Air</div></div>
<div class="row" style="top:329.8px"><svg class="ar" width="5" height="6" viewBox="0 0 5 6"><path d="M.8 .6L4.2 3 .8 5.4z" fill="#fff" stroke="#a0a0a0" stroke-width=".7"/></svg><svg class="ic" width="9.8" height="9.8" viewBox="0 0 9 9"><circle cx="4.5" cy="4.5" r="3.7" fill="#f6eafd" stroke="#b468e0" stroke-width=".9"/><path d="M1.6 4.5h5.8M2.6 3h3.8M3 6q1.5 1 3 0" stroke="#b468e0" stroke-width=".7" fill="none"/></svg><div class="tx lt">Gas Mixture</div></div>
<div class="row" style="top:340.35px"><svg class="ar" width="5" height="6" viewBox="0 0 5 6"><path d="M.8 .6L4.2 3 .8 5.4z" fill="#fff" stroke="#a0a0a0" stroke-width=".7"/></svg><svg class="ic" width="9.8" height="9.8" viewBox="0 0 9 9"><path d="M1 2.2q-.6-1.4 1-1.4M3 .8h1v1.4H3zM5 2.2V.8l.8.8.8-.8v1.4" stroke="#e05040" stroke-width=".6" fill="none"/><path d="M.8 7.4L2 4.6l1.2 2.8M4.4 5.4q-1.2 0-1 1t1.2 1M5.4 5.4q-1.2 0-1 1t1.2 1M6.6 4.6v3l1.6-1.4" stroke="#e87060" stroke-width=".6" fill="none"/></svg><div class="tx lt">Generic Cosimulation</div></div>
<div class="row" style="top:350.9px"><svg class="ar" width="5" height="6" viewBox="0 0 5 6"><path d="M.8 .6L4.2 3 .8 5.4z" fill="#fff" stroke="#a0a0a0" stroke-width=".7"/></svg><svg class="ic" width="9.8" height="9.8" viewBox="0 0 9 9"><path d="M1 1.4h2.4v2H1zM4.6 1h3.2M6.2 .6v3M2 4.4v3h2.6M5.6 6l2.4 2M5.6 8l2.4-2" stroke="#7030c0" stroke-width=".9" fill="none"/><circle cx="5" cy="4.6" r="1" fill="#9050d8"/></svg><div class="tx lt">Electrical Static Conversion</div></div>
<div class="row" style="top:361.45px"><svg class="ar" width="5" height="6" viewBox="0 0 5 6"><path d="M.8 .6L4.2 3 .8 5.4z" fill="#fff" stroke="#a0a0a0" stroke-width=".7"/></svg><svg class="ic" width="9.8" height="9.8" viewBox="0 0 9 9"><path d="M1.2 3L6.2 .8l2 4.4-5 2.4z" fill="#f4a8a0" stroke="#e04040" stroke-width=".9"/><path d="M2.4 4l4-1.8M3 5.4l4-1.8" stroke="#e04040" stroke-width=".6"/><path d="M.8 7.8l2.4-.8" stroke="#c03030" stroke-width="1"/></svg><div class="tx lt">Engine Signal Generator</div></div>
<div class="row" style="top:372px"><svg class="ar" width="5" height="6" viewBox="0 0 5 6"><path d="M.8 .6L4.2 3 .8 5.4z" fill="#fff" stroke="#a0a0a0" stroke-width=".7"/></svg><svg class="ic" width="9.8" height="9.8" viewBox="0 0 9 9"><path d="M1 1h2.6M1 1v6.8h2.6M5 2.2h3M5 4.4h3M5 6.6h3M6.5 1v1.2" stroke="#c8a860" stroke-width=".9" fill="none"/><rect x="1.8" y="3" width="1.6" height="2.8" fill="#e0c890"/></svg><div class="tx lt">electrochemistry</div></div>
<div class="row" style="top:382.55px"><svg class="ar" width="5" height="6" viewBox="0 0 5 6"><path d="M.8 .6L4.2 3 .8 5.4z" fill="#fff" stroke="#a0a0a0" stroke-width=".7"/></svg><svg class="ic" width="9.8" height="9.8" viewBox="0 0 9 9"><path d="M.6 1.2h7.8M.6 7.8h7.8M3 1.2v6.6M6 1.2v6.6M.6 4.5h7.8" stroke="#2a8a78" stroke-width="1.1"/></svg><div class="tx lt">Fuel Cell</div></div>
<div class="row" style="top:393.1px"><svg class="ar" width="5" height="6" viewBox="0 0 5 6"><path d="M.8 .6L4.2 3 .8 5.4z" fill="#fff" stroke="#a0a0a0" stroke-width=".7"/></svg><svg class="ic" width="9.8" height="9.8" viewBox="0 0 9 9"><path d="M1.6 .8v3.4M.6 2.4h2M5 .8h3v2.4H5zM1 5.4h2.4v3H1zM5.4 5v3.6M7.4 5v3.6M4.6 6.8h3.8" stroke="#c468e4" stroke-width=".9" fill="none"/></svg><div class="tx lt">Automotive Electrics</div></div>
<div class="row" style="top:403.65px"><svg class="ar" width="5" height="6" viewBox="0 0 5 6"><path d="M.8 .6L4.2 3 .8 5.4z" fill="#fff" stroke="#a0a0a0" stroke-width=".7"/></svg><svg class="ic" width="9.8" height="9.8" viewBox="0 0 9 9"><path d="M1.8 7.2V4.4a2.8 2.8 0 0 1 5.6 0v2.8" stroke="#48b048" stroke-width="1" fill="none"/><circle cx="1.8" cy="7.4" r="1.1" fill="#48b048"/><circle cx="7.4" cy="7.4" r="1.1" fill="#48b048"/><path d="M3.4 1.4l1.2.8-1.2.8" stroke="#78c878" stroke-width=".6" fill="none"/></svg><div class="tx lt">Cams and Followers</div></div>
<div class="row" style="top:414.2px"><svg class="ar" width="5" height="6" viewBox="0 0 5 6"><path d="M.8 .6L4.2 3 .8 5.4z" fill="#fff" stroke="#a0a0a0" stroke-width=".7"/></svg><svg class="ic" width="9.8" height="9.8" viewBox="0 0 9 9"><path d="M.8 1h1.4M3 .8v2M4.4 1.4h1.6" stroke="#2a8070" stroke-width=".7"/><path d="M1.4 3v5.4" stroke="#2a8070" stroke-width="1.3"/><path d="M4 3.4v5h1.4q2.8 0 2.8-2.5T5.4 3.4z" fill="none" stroke="#2a8070" stroke-width="1.2"/></svg><div class="tx lt">CFD 1D</div></div>
</div>
<div class="hdr" style="top:454.8px"><div class="t">专业库项目</div></div>
<div class="a" style="left:2px;top:468px;width:12px;height:12px;border:1px solid #b8b8b8;border-radius:1.5px;background:#ececec"></div>
<div class="a" style="left:15.5px;top:468px;width:12px;height:12px;border:1px solid #b8b8b8;border-radius:1.5px;background:#ececec"></div>
<svg style="left:4px;top:470.5px" width="8" height="7" viewBox="0 0 8 7"><path d="M.4 1h2.6l.6.8h4v4.8H.4z" fill="#f0d050" stroke="#6a5a20" stroke-width=".6"/><path d="M2.4 3.8h3.2" stroke="#1a4aa0" stroke-width="1.2"/></svg>
<svg style="left:17.5px;top:470.5px" width="8" height="7" viewBox="0 0 8 7"><path d="M.4 1h2.6l.6.8h4v4.8H.4z" fill="#f0d050" stroke="#6a5a20" stroke-width=".6"/><path d="M5.4 .4h2.2v2.4" stroke="#1a4aa0" stroke-width="1.2" fill="none"/></svg>
<div class="a" style="left:29.5px;top:468px;width:1px;height:12px;background:#d4d4d4"></div>
<div class="a" style="left:1px;top:480.5px;width:160px;height:31px;background:#fff;border:1px solid #b4b8be"><svg style="left:12px;top:.5px" width="14" height="15" viewBox="0 0 12 13"><path d="M.6 3h3.6l1 1.2h5.4v6H.6z" fill="#e8c040" stroke="#a88a20" stroke-width=".5"/><path d="M.6 10.2L2.2 5.4h9.6l-1.6 4.8z" fill="#fff0a0" stroke="#b89a30" stroke-width=".5"/><path d="M6.4 9q2-3 .2-6.2h1.8L5.8 .2 3 2.8h1.8q1.4 2.6-.6 5z" fill="#2aa02a" stroke="#1a7a1a" stroke-width=".3"/></svg>
<svg style="left:51px;top:1px" width="14.5" height="14.5" viewBox="0 0 12 12"><path d="M.6 3h3.6l1 1.2h5.4v6H.6z" fill="#e8c040" stroke="#a88a20" stroke-width=".5"/><path d="M.6 10.2L2.2 5.4h9.6l-1.6 4.8z" fill="#fff0a0" stroke="#b89a30" stroke-width=".5"/></svg>
<svg style="left:89px;top:1px" width="14.5" height="14.5" viewBox="0 0 12 12"><path d="M.6 3h3.6l1 1.2h5.4v6H.6z" fill="#e8c040" stroke="#a88a20" stroke-width=".5"/><path d="M.6 10.2L2.2 5.4h9.6l-1.6 4.8z" fill="#fff0a0" stroke="#b89a30" stroke-width=".5"/></svg>
<svg style="left:127px;top:1px" width="14.5" height="14.5" viewBox="0 0 12 12"><path d="M.6 3h3.6l1 1.2h5.4v6H.6z" fill="#e8c040" stroke="#a88a20" stroke-width=".5"/><path d="M.6 10.2L2.2 5.4h9.6l-1.6 4.8z" fill="#fff0a0" stroke="#b89a30" stroke-width=".5"/></svg>
<div class="t" style="left:16.5px;top:17px;font-size:7.2px;color:#111;color:#888;letter-spacing:1px">..</div>
<div class="t lt" style="left:52.5px;top:18.5px;font-size:7.2px;color:#111">All</div>
<div class="t lt" style="left:81.5px;top:18.5px;font-size:7.2px;color:#111">Sources,</div>
<div class="t lt" style="left:87px;top:26.5px;font-size:7.2px;color:#111">Sinks</div>
<div class="t lt" style="left:125px;top:18.5px;font-size:7.2px;color:#111">Maths</div>
<div class="t lt" style="left:154px;top:18.5px;font-size:7.2px;color:#111">C</div></div>
</div>
</div>
<style>
.dlg{will-change:transform;position:absolute;border:1px solid #39424e;border-top-color:#6a727c;border-radius:3.5px 3.5px 1px 1px;box-shadow:0 0 4px rgba(0,0,0,.3)}
.dlg .in{position:absolute;background:#f0f0f0;border:1px solid rgba(255,255,255,.5)}
.dlg .ttx{position:absolute;font-size:7.4px;line-height:1;white-space:nowrap;color:#101418}
.gb{position:absolute;border:1px solid #c8c8c8;background:#f1f1f1}
.gt{position:absolute;left:-1.5px;width:100%;text-align:center;font-family:"Liberation Mono",monospace;font-weight:bold;font-size:8.8px;line-height:1;letter-spacing:-.2px;color:#000}
.gd{position:absolute;font-family:"Liberation Mono",monospace;font-size:6.4px;letter-spacing:-.31px;line-height:8.25px;white-space:pre;color:#000;-webkit-text-stroke:.2px #000}
.it{position:absolute;font-family:"Liberation Sans","Noto Sans CJK SC",sans-serif;font-style:italic;font-size:7px;line-height:8.1px;white-space:pre;color:#000;-webkit-text-stroke:.15px #000}
.wh{position:absolute;background:#fff}
.btn{position:absolute;width:42.6px;height:12.4px;border:1px solid #8a8a8a;border-radius:2px;background:linear-gradient(#f6f6f6,#e9e9e9 50%,#dcdcdc);font-size:7.2px;line-height:10.6px;text-align:center;white-space:nowrap;color:#000}
.btn i{font-style:normal;font-family:"Liberation Mono",monospace;font-size:6.8px;letter-spacing:-.8px;margin-left:.3px}
.btn.f{border-color:#3c92d6;box-shadow:inset 0 0 0 1px #8fd4f6;background:linear-gradient(#f4f6f8,#e6eaee 48%,#d6dbe0 52%,#cfd4da)}
</style>
<div class="dlg" style="left:300.1px;top:177.8px;width:186.6px;height:207.4px;background:linear-gradient(#c4d8ee 0,#a4c2e3 2px,#abc8e8 9px,#b6d0ec 17px,#b8d2ee 100%)">
<svg style="left:5.4px;top:5.7px" width="9.2" height="9.2" viewBox="0 0 10 10"><rect x=".3" y=".3" width="9.4" height="9.4" rx="1.6" fill="#1590d8"/><path d="M1.6 1.6L8.4 8.4M8.4 1.6L1.6 8.4" stroke="#8fe0ff" stroke-width="1.5"/><circle cx="5" cy="5" r="1.5" fill="#fff"/></svg>
<div class="ttx" style="left:16.9px;top:6.9px;font-size:7.2px">外部变量</div>
<div class="a" style="left:142.2px;top:5.4px;width:18px;height:10.2px;border:1px solid #6d83a3;border-radius:2px;background:linear-gradient(#d3e1f1,#b3c9e3 48%,#9fbadb 52%,#b0c9e6);font-size:6.5px;line-height:8.4px;text-align:center;color:#5a6578;font-weight:bold">?</div>
<div class="a" style="left:161.8px;top:5.4px;width:18px;height:10.2px;border:1px solid #6a2a20;border-radius:2px;background:linear-gradient(#eab0a2,#d9705a 48%,#c8452a 52%,#d6603f);"><svg style="left:5.2px;top:1.3px" width="5.6" height="5.6" viewBox="0 0 6 6"><path d="M.8 .8l4.4 4.4M5.2 .8L.8 5.2" stroke="#6a3a34" stroke-width="2.3"/><path d="M.8 .8l4.4 4.4M5.2 .8L.8 5.2" stroke="#fff" stroke-width="1.4"/></svg></div>
<div class="in" style="left:2.8px;top:15.8px;width:179.1px;height:186.8px">
<div class="gb" style="left:7.1px;top:7.4px;width:164px;height:47px"><div class="gt" style="top:6.3px">THGCV1</div><div class="gd" style="left:4.5px;top:17.9px">external mixed convective exchange with
variable signal (either velocity or heat
exchange coefficient)</div></div>
<div class="it" style="left:6.6px;top:58px">对于直接关联的变量,
箭头的方向表明正向.</div>
<div class="wh" style="left:6.3px;top:77px;width:165px;height:85px">
<svg style="left:-311.1px;top:-272.8px" width="960" height="720" viewBox="0 0 960 720" fill="none">
<g transform="translate(-.6 .3)"><path d="M361 300l1.4-8 1.8 10.5 2-9 2.2 7.5 2-6.5 1.8 3.5 2.4-3.5h2.4" stroke="#9a4a10" stroke-width=".9"/><path d="M362.3 291v11.5M361.3 292.5l1-1.6 1 1.6" stroke="#9a4a10" stroke-width=".6"/><path d="M366 304.5l11-13M375.5 291.6h1.8v1.8" stroke="#b87030" stroke-width=".5"/><rect x="376.2" y="294.5" width="3.6" height="2.4" stroke="#9a4a10" stroke-width=".7" fill="#fff"/></g>
<path d="M379 295.6H397M365.6 303.5v14.5" stroke="#444" stroke-width=".7"/>
<rect x="397" y="293.5" width="4.5" height="5" stroke="#555" stroke-width=".7" fill="#fff"/><rect x="402" y="284.5" width="28.5" height="23" stroke="#333" stroke-width=".8" fill="#fff"/>
<path d="M403.5 290.3h6" stroke="#1a7a1a" stroke-width="1.5"/><path d="M411.8 290.3l-3.4-2.3v4.6z" fill="#1a7a1a"/><path d="M406 301h5.5" stroke="#7a1414" stroke-width="1.5"/><path d="M403.5 301l3.4-2.3v4.6z" fill="#7a1414"/>
<text x="413.5" y="292.7" font-family="Liberation Mono,monospace" font-size="6.2" fill="#111" stroke="#111" stroke-width=".25">W</text><text x="413.5" y="303.2" font-family="Liberation Mono,monospace" font-size="6.2" letter-spacing="-.3" fill="#111" stroke="#111" stroke-width=".25">degC</text>
<rect x="364" y="318" width="5" height="5" stroke="#555" stroke-width=".7" fill="#fff"/><rect x="356.5" y="323.5" width="19" height="21.5" stroke="#333" stroke-width=".8" fill="#fff"/>
<path d="M365 334v-5" stroke="#7a1414" stroke-width="1.6"/><path d="M365 326l-2.3 3.4h4.6z" fill="#7a1414"/><text x="365" y="341.3" font-family="Liberation Mono,monospace" font-size="6.2" letter-spacing="-.3" fill="#111" stroke="#111" stroke-width=".25" text-anchor="middle">null</text>
</svg></div>
<div class="btn f" style="left:7.1px;top:165.6px">帮助<i>(H)</i></div><div class="btn" style="left:127.1px;top:165.6px">关闭<i>(C)</i></div>
</div></div>
<div class="dlg" style="left:530.9px;top:197.3px;width:186.7px;height:164.6px;background:linear-gradient(#c2d2e6 0,#cddcee 3px,#dbe6f4 16px,#dce7f4 100%);border-color:#7e8896;box-shadow:0 0 3px rgba(0,0,0,.22)">
<svg style="left:5.6px;top:5.4px" width="8.9" height="8.9" viewBox="0 0 10 10"><rect x=".3" y=".3" width="9.4" height="9.4" rx="1.6" fill="#1590d8"/><path d="M1.6 1.6L8.4 8.4M8.4 1.6L1.6 8.4" stroke="#8fe0ff" stroke-width="1.5"/><circle cx="5" cy="5" r="1.5" fill="#fff"/></svg>
<div class="ttx" style="left:16.6px;top:6.9px;font-size:7.2px;color:#4a525e">外部变量</div>
<div class="a" style="left:142.4px;top:4.95px;width:17.4px;height:10.25px;border:1px solid #a3b6cf;border-radius:2px;background:linear-gradient(#d5e1f0,#c6d6ea);font-size:6.5px;line-height:8.4px;text-align:center;color:#7c8798;font-weight:bold">?</div>
<div class="a" style="left:161.85px;top:4.95px;width:17.95px;height:10.25px;border:1px solid #a3b6cf;border-radius:2px;background:linear-gradient(#d5e1f0,#c6d6ea)"><svg style="left:5.3px;top:1.4px" width="5.5" height="5.5" viewBox="0 0 6 6"><path d="M.8 .8l4.4 4.4M5.2 .8L.8 5.2" stroke="#8a94a4" stroke-width="2.2"/><path d="M.8 .8l4.4 4.4M5.2 .8L.8 5.2" stroke="#f4f6fa" stroke-width="1.2"/></svg></div>
<div class="in" style="left:2.9px;top:16.45px;width:179.1px;height:143.5px">
<div class="gb" style="left:7.5px;top:6.6px;width:164px;height:30.5px"><div class="gt" style="top:5.4px">THTS1</div><div class="gd" style="left:4.2px;top:19.3px">constant temperature source</div></div>
<div class="it" style="left:6.7px;top:41.05px">对于直接关联的变量,
箭头的方向表明正向.</div>
<div class="wh" style="left:6.7px;top:59.25px;width:165px;height:58.5px">
<svg style="left:-541.8px;top:-275px" width="960" height="720" viewBox="0 0 960 720" fill="none">
<rect x="588.5" y="297.5" width="28" height="12.5" stroke="#222" stroke-width=".8" fill="#fff"/><path d="M593 303.8h5.5" stroke="#1a6a1a" stroke-width="1.6"/><path d="M590.3 303.8l3.4-2.3v4.6z" fill="#1a6a1a"/><text x="601.5" y="306" font-family="Liberation Mono,monospace" font-size="6" letter-spacing="-.3" fill="#111" stroke="#111" stroke-width=".25">degC</text>
<rect x="617" y="301" width="5" height="5.5" stroke="#555" stroke-width=".7" fill="#fff"/><path d="M622 304H638" stroke="#444" stroke-width=".7"/><rect x="638" y="302.5" width="7" height="3" fill="#c89ab0" stroke="#8a3a5a" stroke-width=".5"/>
<circle cx="652" cy="304" r="6.1" stroke="#8a2a50" stroke-width="1.1" fill="#fff"/><path d="M652.5 302v4M651.3 306.5h2.4" stroke="#b07a90" stroke-width=".7"/>
<path d="M646.5 300v9l2.2-2 1.6 3.4 1.4-.7-1.6-3.3h3z" fill="#fff" stroke="#222" stroke-width=".6"/>
</svg></div>
<div class="btn" style="left:7.2px;top:121.95px">帮助<i>(H)</i></div><div class="btn" style="left:127.4px;top:121.95px">关闭<i>(C)</i></div>
</div></div>
<div class="t" style="will-change:transform;left:824px;top:657px;font-family:'Noto Sans CJK SC','Liberation Sans',sans-serif;font-weight:900;font-size:33px;line-height:40px;transform-origin:0 0;transform:scaleX(1.31);letter-spacing:-.6px"><span style="color:#0a6cff">爱</span><span style="color:#333">液压</span></div>
<div class="t" id="www" style="will-change:transform;left:824.5px;top:692.7px;font-family:'Liberation Sans',sans-serif;font-weight:bold;font-size:19px;line-height:20px;color:#666;transform-origin:0 0;transform:scaleX(1.005)">www.iyeya.cn</div>
</body></html>
